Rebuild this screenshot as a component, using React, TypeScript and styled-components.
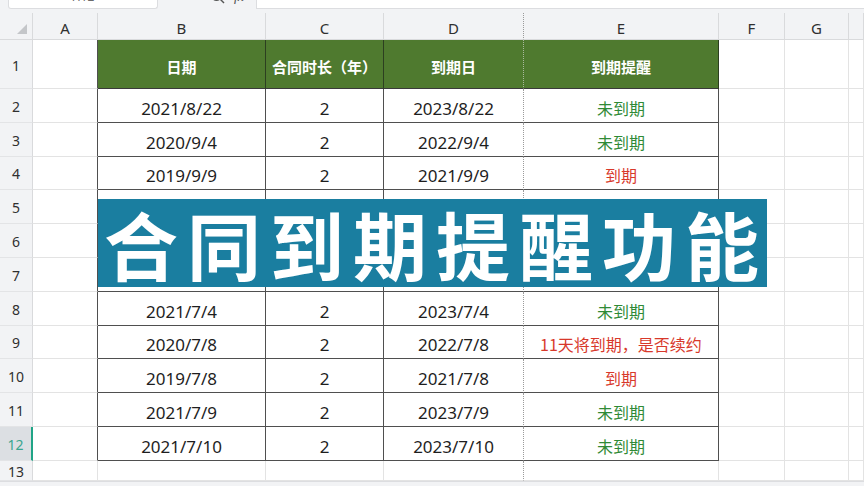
import React from "react";
import styled, { createGlobalStyle, css } from "styled-components";

const GlobalStyle = createGlobalStyle`
  html, body { margin: 0; padding: 0; width: 864px; height: 486px; overflow: hidden; background: #f2f3f5; }
  #root { width: 864px; height: 486px; }
  * { box-sizing: border-box; }
`;

const Page = styled.div`
  width: 864px;
  height: 486px;
  display: flex;
  flex-direction: column;
  background: #f2f3f5;
  font-family: "Noto Sans", "Noto Sans CJK SC", sans-serif;
  overflow: hidden;
`;

const FormulaBar = styled.div`
  height: 9px;
  flex: none;
  overflow: hidden;
  display: flex;
  align-items: flex-end;
  padding-left: 8px;
`;

const NameBox = styled.div`
  width: 150px;
  height: 24px;
  flex: none;
  background: #ffffff;
  border: 1px solid #dcdde0;
  border-top: none;
  border-radius: 0 0 3px 3px;
  display: flex;
  align-items: center;
  justify-content: center;
  color: #6b6b6b;
  font-size: 12px;
`;

const FxGroup = styled.div`
  width: 98px;
  height: 24px;
  flex: none;
  display: flex;
  align-items: center;
  justify-content: flex-end;
  gap: 8px;
  padding-right: 12px;
  color: #555;
  font-size: 14px;
  font-style: italic;
  font-family: "Liberation Serif", serif;
`;

const FormulaInput = styled.div`
  flex: 1;
  height: 24px;
  background: #ffffff;
  border: 1px solid #dcdde0;
  border-top: none;
  border-right: none;
`;

const Spacer = styled.div`
  height: 4px;
  flex: none;
`;

const SheetArea = styled.div`
  position: relative;
  flex: none;
`;

const Grid = styled.div`
  display: grid;
  grid-template-columns: 33px 65px 168px 118px 140px 195px 66px 64px 15px;
  grid-template-rows: 27px 49px repeat(11, 33.8px) 20px;
  background: #ffffff;
`;

type Kind = "corner" | "colhead" | "rowhead" | "plain" | "edge" | "thead" | "tcell";

const Cell = styled.div<{ $kind: Kind; $dotted?: boolean; $selected?: boolean }>`
  display: flex;
  justify-content: center;
  align-items: center;
  overflow: hidden;
  white-space: nowrap;
  border-right: 1px solid #e3e3e3;
  border-bottom: 1px solid #e3e3e3;
  color: #1e1e1e;
  font-size: 17px;

  ${(p) =>
    p.$kind === "corner" &&
    css`
      background: #f2f3f5;
      border-right: 1px solid #d9dadc;
      border-bottom: 1px solid #d9dadc;
      position: relative;
    `}

  ${(p) =>
    p.$kind === "colhead" &&
    css`
      background: #f2f3f5;
      border-right: 1px solid #d9dadc;
      border-bottom: 1px solid #d9dadc;
      color: #2f2f2f;
      font-size: 15px;
      padding-top: 3px;
    `}

  ${(p) =>
    p.$kind === "rowhead" &&
    css`
      background: #f2f3f5;
      border-right: 1px solid #d9dadc;
      border-bottom: 1px solid #e3e4e6;
      color: #2f2f2f;
      font-size: 14px;
      padding-top: 2px;
    `}

  ${(p) =>
    p.$kind === "rowhead" &&
    p.$selected &&
    css`
      background: #dcdfe3;
      color: #3aa58f;
      border-right: 2px solid #20a486;
    `}

  ${(p) =>
    p.$kind === "edge" &&
    css`
      border-right: 1px solid #4f4f4f;
    `}

  ${(p) =>
    p.$kind === "thead" &&
    css`
      background: #4f7a2f;
      color: #ffffff;
      font-weight: 700;
      font-size: 15px;
      font-family: "Noto Sans CJK SC", sans-serif;
      border-right: 1px solid #2c3f20;
      border-bottom: 1px solid #3a3a3a;
      padding-top: 5px;
    `}

  ${(p) =>
    p.$kind === "tcell" &&
    css`
      border-right: 1px solid #4f4f4f;
      border-bottom: 1px solid #4f4f4f;
      align-items: flex-end;
      padding-bottom: 2px;
    `}

  ${(p) =>
    p.$dotted &&
    css`
      border-right: 1px dotted #9a9a9a;
    `}
  ${(p) =>
    p.$dotted &&
    p.$kind === "thead" &&
    css`
      border-right: 1px dotted #a9b99c;
    `}
`;

const CornerMark = styled.div`
  position: absolute;
  right: 5px;
  bottom: 5px;
  width: 0;
  height: 0;
  border-left: 10px solid transparent;
  border-bottom: 10px solid #c4c6c9;
`;

const Status = styled.span<{ $tone: "ok" | "due" }>`
  font-family: "Noto Sans CJK SC", sans-serif;
  font-size: 16px;
  color: ${(p) => (p.$tone === "ok" ? "#2f8a36" : "#d8392b")};
`;

const Banner = styled.div`
  position: absolute;
  left: 98px;
  top: 186px;
  width: 669px;
  height: 88px;
  background: #1a7ea0;
  display: flex;
  align-items: center;
  padding-left: 6px;
  color: #ffffff;
  font-family: "Noto Sans CJK SC", sans-serif;
  font-weight: 700;
  font-size: 74px;
  letter-spacing: 9px;
  line-height: 1;
  white-space: nowrap;
`;

const BottomStrip = styled.div`
  flex: 1;
  border-top: 1px solid #dcdde0;
  background: #f2f3f5;
`;

type Row = { b: string; c: string; d: string; e: string; tone: "ok" | "due" };

const rows: Row[] = [
  { b: "2021/8/22", c: "2", d: "2023/8/22", e: "未到期", tone: "ok" },
  { b: "2020/9/4", c: "2", d: "2022/9/4", e: "未到期", tone: "ok" },
  { b: "2019/9/9", c: "2", d: "2021/9/9", e: "到期", tone: "due" },
  { b: "2021/7/15", c: "2", d: "2023/7/15", e: "未到期", tone: "ok" },
  { b: "2020/7/20", c: "2", d: "2022/7/20", e: "未到期", tone: "ok" },
  { b: "2020/7/3", c: "2", d: "2022/7/3", e: "到期", tone: "due" },
  { b: "2021/7/4", c: "2", d: "2023/7/4", e: "未到期", tone: "ok" },
  { b: "2020/7/8", c: "2", d: "2022/7/8", e: "11天将到期，是否续约", tone: "due" },
  { b: "2019/7/8", c: "2", d: "2021/7/8", e: "到期", tone: "due" },
  { b: "2021/7/9", c: "2", d: "2023/7/9", e: "未到期", tone: "ok" },
  { b: "2021/7/10", c: "2", d: "2023/7/10", e: "未到期", tone: "ok" },
];

const letters = ["A", "B", "C", "D", "E", "F", "G", ""];

const SearchIcon = () => (
  <svg width="16" height="16" viewBox="0 0 16 16" fill="none" stroke="#555" strokeWidth="1.4">
    <circle cx="6.5" cy="6.5" r="4.8" />
    <path d="M10 10l4 4" />
  </svg>
);

export default function App() {
  return (
    <Page>
      <GlobalStyle />
      <FormulaBar>
        <NameBox>H12</NameBox>
        <FxGroup>
          <SearchIcon />
          <span>fx</span>
        </FxGroup>
        <FormulaInput />
      </FormulaBar>
      <Spacer />
      <SheetArea>
        <Grid>
          <Cell $kind="corner">
            <CornerMark />
          </Cell>
          {letters.map((l, i) => (
            <Cell key={"h" + i} $kind="colhead" $dotted={l === "D"}>
              {l}
            </Cell>
          ))}

          <Cell $kind="rowhead">1</Cell>
          <Cell $kind="edge" />
          <Cell $kind="thead">日期</Cell>
          <Cell $kind="thead">合同时长（年）</Cell>
          <Cell $kind="thead" $dotted>
            到期日
          </Cell>
          <Cell $kind="thead">到期提醒</Cell>
          <Cell $kind="plain" />
          <Cell $kind="plain" />
          <Cell $kind="plain" />

          {rows.map((r, i) => (
            <React.Fragment key={"r" + i}>
              <Cell $kind="rowhead" $selected={i === 10}>
                {i + 2}
              </Cell>
              <Cell $kind="edge" />
              <Cell $kind="tcell">{r.b}</Cell>
              <Cell $kind="tcell">{r.c}</Cell>
              <Cell $kind="tcell" $dotted>
                {r.d}
              </Cell>
              <Cell $kind="tcell">
                <Status $tone={r.tone}>{r.e}</Status>
              </Cell>
              <Cell $kind="plain" />
              <Cell $kind="plain" />
              <Cell $kind="plain" />
            </React.Fragment>
          ))}

          <Cell $kind="rowhead">13</Cell>
          <Cell $kind="plain" />
          <Cell $kind="plain" />
          <Cell $kind="plain" />
          <Cell $kind="plain" $dotted />
          <Cell $kind="plain" />
          <Cell $kind="plain" />
          <Cell $kind="plain" />
          <Cell $kind="plain" />
        </Grid>
        <Banner>合同到期提醒功能</Banner>
      </SheetArea>
      <BottomStrip />
    </Page>
  );
}
